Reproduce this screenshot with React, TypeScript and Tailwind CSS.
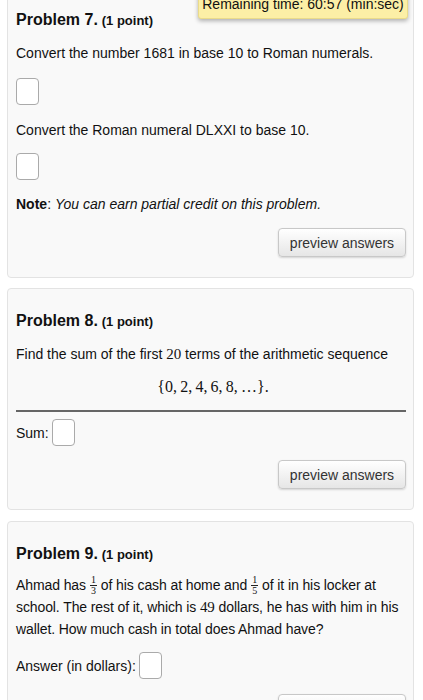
import React from "react";

const sans = { fontFamily: '"Liberation Sans", Arial, sans-serif' };
const serif = { fontFamily: '"Liberation Serif", "Times New Roman", serif' };

function Box() {
  return <span className="inline-block w-[23px] h-[27px] bg-white border border-[#aaa] rounded-[4px] align-middle" />;
}

function PreviewButton({ className = "" }: { className?: string }) {
  return (
    <div className={"flex justify-end " + className}>
      <button className="w-[128px] h-[29px] text-[14px] text-[#333] rounded-[4px] border border-[#c8c8c8] bg-gradient-to-b from-white to-[#e6e6e6] shadow-[0_1px_2px_rgba(0,0,0,0.15)]">
        preview answers
      </button>
    </div>
  );
}

function Frac({ n, d }: { n: string; d: string }) {
  return (
    <span
      className="inline-flex flex-col items-center align-middle text-[10px] leading-[10px] mx-[4px] -mt-[2px]"
      style={serif}
    >
      <span className="px-[1px] border-b border-[#222]">{n}</span>
      <span>{d}</span>
    </span>
  );
}

function Heading({ n }: { n: number }) {
  return (
    <div className="font-bold leading-[20px]">
      <span className="text-[16px]">Problem {n}.</span>{" "}
      <span className="text-[13px]">(1 point)</span>
    </div>
  );
}

export default function App() {
  return (
    <div className="relative w-[423px] h-[700px] overflow-hidden bg-white text-[#111] text-[14px] leading-[20px]" style={sans}>
      <div className="absolute right-[15px] top-[-12px] w-[210px] h-[31px] flex items-center justify-center bg-[#fcefa6] border border-[#eadb8a] rounded-[3px] shadow-[0_2px_4px_rgba(0,0,0,0.3)] text-[14px] z-10">
        Remaining time: 60:57 (min:sec)
      </div>

      <div className="ml-[7px] w-[407px] mt-[-13px] bg-[#f9f9f9] border border-[#e3e3e3] rounded-[4px] px-[8px] pt-[22px] pb-[20px]">
        <Heading n={7} />
        <p className="mt-[12px]">Convert the number 1681 in base 10 to Roman numerals.</p>
        <div className="mt-[15px] h-[27px] flex"><Box /></div>
        <p className="mt-[15px]">Convert the Roman numeral DLXXI to base 10.</p>
        <div className="mt-[13px] h-[27px] flex"><Box /></div>
        <p className="mt-[14px]">
          <b>Note</b>: <i>You can earn partial credit on this problem.</i>
        </p>
        <PreviewButton className="mt-[14px] mr-[-1px]" />
      </div>

      <div className="ml-[7px] w-[407px] mt-[10px] bg-[#f9f9f9] border border-[#e3e3e3] rounded-[4px] px-[8px] pt-[22px] pb-[20px]">
        <Heading n={8} />
        <p className="mt-[12px]">
          Find the sum of the first <span className="text-[15px]" style={serif}>20</span> terms of the arithmetic sequence
        </p>
        <p className="mt-[13px] text-center text-[16px] pl-[5px]" style={serif}>
          {"{0,\u20092,\u20094,\u20096,\u20098,\u2009\u2026}."}
        </p>
        <div className="mt-[13px] h-[2px] bg-[#666] mr-[-1px]" />
        <div className="mt-[7px] h-[27px] flex items-center gap-[3px]">
          <span>Sum:</span>
          <Box />
        </div>
        <PreviewButton className="mt-[14px] mr-[-1px]" />
      </div>

      <div className="ml-[7px] w-[407px] mt-[11px] bg-[#f9f9f9] border border-[#e3e3e3] rounded-[4px] px-[8px] pt-[22px] pb-[20px]">
        <Heading n={9} />
        <p className="mt-[9px] leading-[22px] whitespace-nowrap tracking-[-0.1px]">
          Ahmad has<Frac n="1" d="3" />of his cash at home and<Frac n="1" d="5" />of it in his locker at
          <br />
          school. The rest of it, which is <span className="text-[15px]" style={serif}>49</span> dollars, he has with him in his
          <br />
          wallet. How much cash in total does Ahmad have?
        </p>
        <div className="mt-[12px] h-[27px] flex items-center gap-[3px]">
          <span>Answer (in dollars):</span>
          <Box />
        </div>
        <PreviewButton className="mt-[15px] mr-[-1px]" />
      </div>
    </div>
  );
}
